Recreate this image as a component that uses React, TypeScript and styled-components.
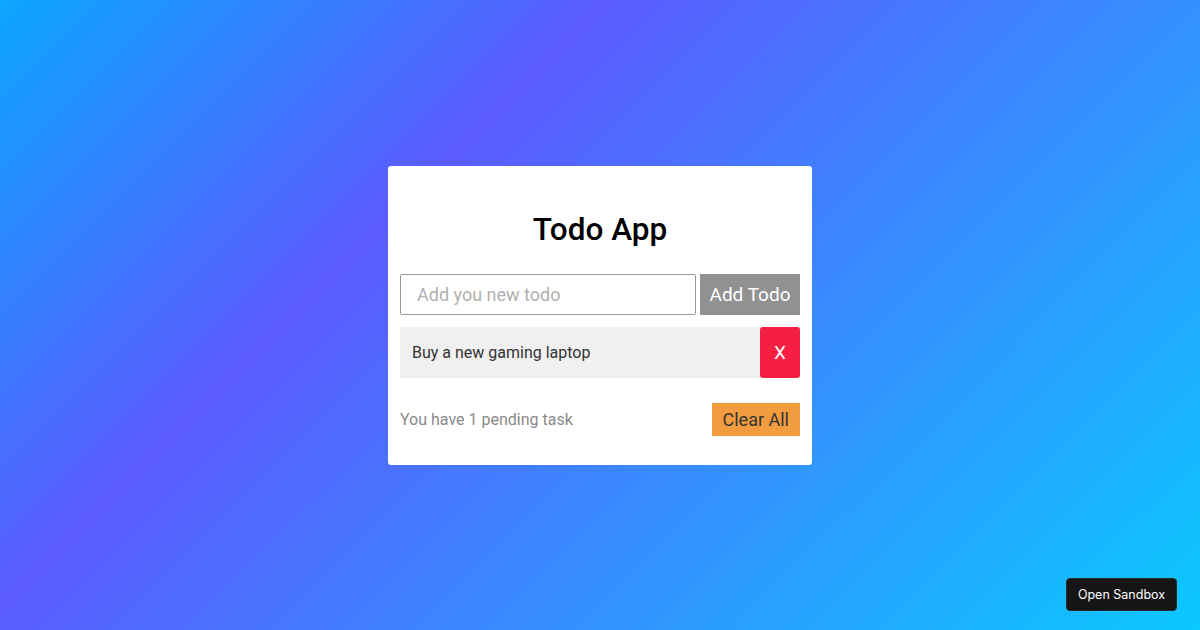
import React from "react";
import styled, { createGlobalStyle } from "styled-components";

const Global = createGlobalStyle`
  * { box-sizing: border-box; }
  html, body { margin: 0; padding: 0; height: 100%; }
  body {
    font-family: Roboto, "Noto Sans", sans-serif;
    background: linear-gradient(135deg, #0ca6ff 0%, #5b5bff 33%, #0bc8ff 100%);
    background-attachment: fixed;
  }
  #root { height: 100%; }
`;

const Page = styled.div`
  height: 100vh;
  display: flex;
  align-items: center;
  justify-content: center;
`;

const Card = styled.div`
  width: 424px;
  background: #fff;
  border-radius: 3px;
  padding: 0 12px 29px;
`;

const Title = styled.h1`
  margin: 45px 0 25px;
  font-size: 31.5px;
  line-height: 38px;
  font-weight: 500;
  text-align: center;
  color: #000;
`;

const InputRow = styled.div`
  display: flex;
  gap: 4px;
  height: 41px;
`;

const TextInput = styled.input`
  flex: 1;
  min-width: 0;
  height: 100%;
  border: 1px solid #999;
  border-radius: 2px;
  padding: 0 16px;
  font-family: inherit;
  font-size: 18px;
  color: #333;
  outline: none;
  &::placeholder { color: #b0b0b0; }
`;

const AddButton = styled.button`
  width: 100px;
  height: 100%;
  border: none;
  background: #919191;
  color: #fff;
  font-family: inherit;
  font-size: 19px;
  padding: 0;
`;

const List = styled.ul`
  list-style: none;
  margin: 12px 0 0;
  padding: 0;
`;

const Item = styled.li`
  display: flex;
  align-items: center;
  justify-content: space-between;
  height: 51px;
  background: #f0f0f0;
  padding-left: 12px;
  font-size: 16px;
  color: #333;
`;

const DeleteButton = styled.button`
  width: 40px;
  height: 100%;
  border: none;
  border-radius: 3px;
  background: #f51f42;
  color: #fff;
  font-family: inherit;
  font-size: 19px;
  padding: 0;
`;

const Footer = styled.div`
  display: flex;
  align-items: center;
  justify-content: space-between;
  margin-top: 25px;
`;

const Pending = styled.span`
  font-size: 16px;
  color: #8a8a8a;
`;

const ClearButton = styled.button`
  height: 33px;
  padding: 0 11px;
  border: none;
  background: #f39c3f;
  color: #333;
  font-family: inherit;
  font-size: 18px;
`;

const SandboxButton = styled.button`
  position: fixed;
  right: 23px;
  bottom: 19px;
  width: 111px;
  height: 33px;
  border: 1px solid #2a2a2a;
  border-radius: 4px;
  background: #151515;
  color: #fff;
  font-family: Inter, "Liberation Sans", sans-serif;
  font-size: 12.5px;
  padding: 0;
`;

export default function App() {
  return (
    <>
      <Global />
      <Page>
        <Card>
          <Title>Todo App</Title>
          <InputRow>
            <TextInput placeholder="Add you new todo" />
            <AddButton>Add Todo</AddButton>
          </InputRow>
          <List>
            <Item>
              <span>Buy a new gaming laptop</span>
              <DeleteButton>X</DeleteButton>
            </Item>
          </List>
          <Footer>
            <Pending>You have 1 pending task</Pending>
            <ClearButton>Clear All</ClearButton>
          </Footer>
        </Card>
      </Page>
      <SandboxButton>Open Sandbox</SandboxButton>
    </>
  );
}
